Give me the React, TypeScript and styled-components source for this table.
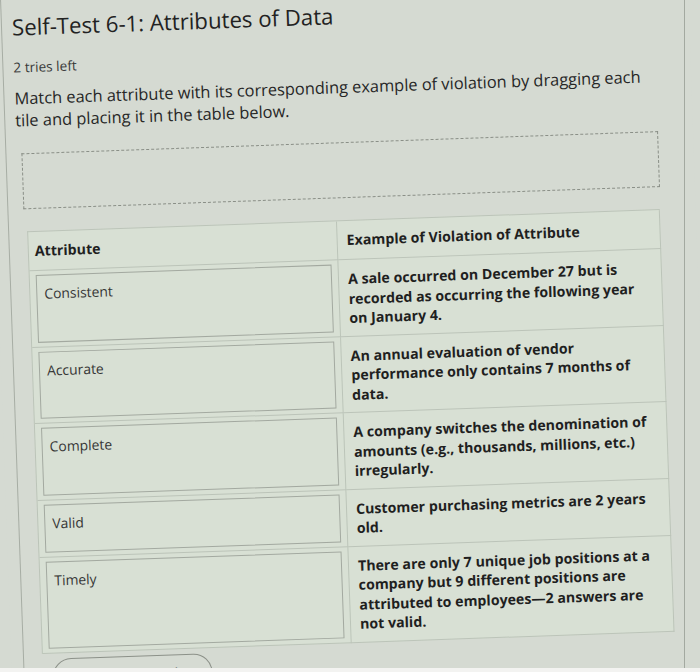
import React from "react";
import styled, { createGlobalStyle } from "styled-components";

const Global = createGlobalStyle`
  html, body {
    margin: 0;
    padding: 0;
    background: #f3f3f1;
  }
  body {
    font-family: "Open Sans", "Liberation Sans", sans-serif;
    color: #262626;
  }
`;

const Viewport = styled.div`
  position: relative;
  width: 700px;
  height: 668px;
  overflow: hidden;
  background: #d5dad2;

  &::after {
    content: "";
    position: absolute;
    top: 0;
    bottom: 0;
    left: 684px;
    width: 1px;
    background: #a3a9a0;
  }
`;

const Sheet = styled.div`
  width: 700px;
  height: 780px;
  margin-top: -40px;
  display: flex;
  background: #d5dad2;
  transform: rotate(-2deg);
  transform-origin: 350px 376px;
`;

const Frame = styled.div`
  box-sizing: border-box;
  margin-left: 12px;
  width: 673px;
  padding: 41px 20px 0 10px;
  border-left: 1px solid #a7ada4;
  display: flex;
  flex-direction: column;
  align-items: stretch;
`;

const Title = styled.h1`
  margin: 0;
  font-size: 22.2px;
  line-height: 30px;
  font-weight: 400;
  color: #222;
`;

const Tries = styled.div`
  margin-top: 15.5px;
  font-size: 13.6px;
  line-height: 18px;
  color: #3a3a3a;
`;

const Prompt = styled.p`
  margin: 11.7px 0 0;
  font-size: 16.4px;
  line-height: 22px;
  color: #262626;
`;

const DropZone = styled.div`
  box-sizing: border-box;
  margin: 22px 0 0 5px;
  height: 56px;
  border: 1px dashed #8a8f87;
`;

const Grid = styled.div`
  margin: 22px 1px 0 8px;
  display: grid;
  grid-template-columns: 309px 1fr;
  border-top: 1px solid #bcc4b9;
  border-left: 1px solid #bcc4b9;
  background: #d8e0d4;
`;

const HeadCell = styled.div<{ $right?: boolean }>`
  padding: 9px ${(p) => (p.$right ? "12px" : "8px")} 9px ${(p) => (p.$right ? "9px" : "6px")};
  font-size: 14.2px;
  line-height: 20px;
  font-weight: 700;
  color: #1f1f1f;
  border-right: 1px solid #bcc4b9;
  border-bottom: 1px solid #bcc4b9;
`;

const AttrCell = styled.div`
  display: flex;
  padding: 4px 6px 4px 6px;
  border-right: 1px solid #bcc4b9;
  border-bottom: 1px solid #bcc4b9;
`;

const Tile = styled.div`
  flex: 1;
  box-sizing: border-box;
  padding: 8px 7px 6px;
  border: 1px solid #a3a9a0;
  font-size: 13.9px;
  line-height: 20px;
  color: #363636;
`;

const ExampleCell = styled.div`
  padding: 9px 12px 8px 9px;
  font-size: 14.2px;
  line-height: 19.5px;
  font-weight: 700;
  color: #1f1f1f;
  border-right: 1px solid #bcc4b9;
  border-bottom: 1px solid #bcc4b9;
`;

const CheckButton = styled.button`
  align-self: flex-start;
  margin: 5px 0 0 18px;
  width: 160px;
  height: 38px;
  border-radius: 19px;
  border: 1px solid #8c9189;
  background: #d6dbd3;
  font-family: "Open Sans", "Liberation Sans", sans-serif;
  font-size: 14px;
  color: #333;
`;

const rows: { attr: string; example: string }[] = [
  {
    attr: "Consistent",
    example:
      "A sale occurred on December 27 but is recorded as occurring the following year on January 4.",
  },
  {
    attr: "Accurate",
    example:
      "An annual evaluation of vendor performance only contains 7 months of data.",
  },
  {
    attr: "Complete",
    example:
      "A company switches the denomination of amounts (e.g., thousands, millions, etc.) irregularly.",
  },
  {
    attr: "Valid",
    example: "Customer purchasing metrics are 2 years old.",
  },
  {
    attr: "Timely",
    example:
      "There are only 7 unique job positions at a company but 9 different positions are attributed to employees\u20142 answers are not valid.",
  },
];

export default function App() {
  return (
    <>
      <Global />
      <Viewport>
        <Sheet>
          <Frame>
            <Title>Self-Test 6-1: Attributes of Data</Title>
            <Tries>2 tries left</Tries>
            <Prompt>
              Match each attribute with its corresponding example of violation by dragging each
              tile and placing it in the table below.
            </Prompt>
            <DropZone />
            <Grid>
              <HeadCell>Attribute</HeadCell>
              <HeadCell $right>Example of Violation of Attribute</HeadCell>
              {rows.map((r) => (
                <React.Fragment key={r.attr}>
                  <AttrCell>
                    <Tile>{r.attr}</Tile>
                  </AttrCell>
                  <ExampleCell>{r.example}</ExampleCell>
                </React.Fragment>
              ))}
            </Grid>
            <CheckButton>Check my work</CheckButton>
          </Frame>
        </Sheet>
      </Viewport>
    </>
  );
}
